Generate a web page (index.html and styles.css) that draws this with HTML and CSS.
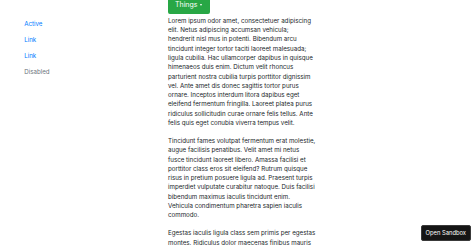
FILE: index.html
```html
<!DOCTYPE html>
<html lang="en">
<head>
<meta charset="utf-8">
<title>Things</title>
<link rel="stylesheet" href="styles.css">
</head>
<body>
<div class="page">
  <nav class="sidebar">
    <a class="nav-link" href="#">Active</a>
    <a class="nav-link" href="#">Link</a>
    <a class="nav-link" href="#">Link</a>
    <span class="nav-link disabled">Disabled</span>
  </nav>
  <main class="content">
    <button class="btn-things" type="button">Things <span class="caret"></span></button>
    <p>Lorem ipsum odor amet, consectetuer adipiscing elit. Netus adipiscing accumsan vehicula; hendrerit nisl mus in potenti. Bibendum arcu tincidunt integer tortor taciti laoreet malesuada; ligula cubilia. Hac ullamcorper dapibus in quisque himenaeos duis enim. Dictum velit rhoncus parturient nostra cubilia turpis porttitor dignissim vel. Ante amet dis donec sagittis tortor purus ornare. Inceptos interdum litora dapibus eget eleifend fermentum fringilla. Laoreet platea purus ridiculus sollicitudin curae ornare felis tellus. Ante felis quis eget conubia viverra tempus velit.</p>
    <p>Tincidunt fames volutpat fermentum erat molestie, augue facilisis penatibus. Velit amet mi netus fusce tincidunt laoreet libero. Amassa facilisi et porttitor class eros sit eleifend? Rutrum quisque risus in pretium posuere ligula ad. Praesent turpis imperdiet vulputate curabitur natoque. Duis facilisi bibendum maximus iaculis tincidunt enim. Vehicula condimentum pharetra sapien iaculis commodo.</p>
    <p>Egestas iaculis ligula class sem primis per egestas montes. Ridiculus dolor maecenas finibus mauris tempor quisque nulla ut nisi. Ligula egestas amet sociosqu feugiat, mollis sem tellus aliquam.</p>
  </main>
</div>
<a class="sandbox-btn" href="#">Open Sandbox</a>
</body>
</html>
```

FILE: styles.css
```css
html, body {
  margin: 0;
  padding: 0;
  background: #fff;
}
body {
  font-family: Inter, "Liberation Sans", Arial, sans-serif;
  font-size: 6.2px;
  line-height: 9.3px;
  color: #212529;
  height: 248px;
  overflow: hidden;
}
.page {
  display: flex;
  align-items: flex-start;
}
.sidebar {
  display: flex;
  flex-direction: column;
  width: 150px;
  padding: 16px 0 0 18px;
  flex: none;
}
.nav-link {
  display: block;
  padding: 3.35px 6.2px;
  color: #007bff;
  text-decoration: none;
}
.nav-link.disabled {
  color: #6c757d;
}
.content {
  width: 147.5px;
  flex: none;
}
.btn-things {
  display: inline-flex;
  align-items: center;
  height: 18px;
  margin-top: -4px;
  font-family: inherit;
  font-size: 7px;
  line-height: 10.5px;
  color: #fff;
  background: #28a745;
  border: 0;
  border-radius: 1.9px;
  padding: 0 8px 0 7px;
  cursor: pointer;
}
.caret {
  display: inline-block;
  width: 0;
  height: 0;
  margin-left: 2.5px;
  border-left: 1.7px solid transparent;
  border-right: 1.7px solid transparent;
  border-top: 2px solid #fff;
}
p {
  margin: 0 0 8.7px 0;
}
.btn-things + p {
  margin-top: 1.5px;
}
.sandbox-btn {
  position: fixed;
  right: 3px;
  bottom: 7px;
  display: block;
  padding: 3px 4px;
  font-size: 5.8px;
  line-height: 8px;
  color: #fff;
  background: #151515;
  border: 0.5px solid #3a3a3a;
  border-radius: 2px;
  text-decoration: none;
}
```
